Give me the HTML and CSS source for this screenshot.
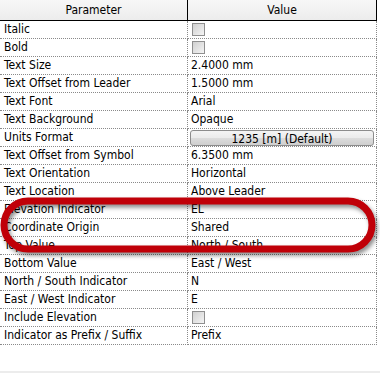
FILE: index.html
```html
<!DOCTYPE html>
<html lang="en">
<head>
    <meta charset="UTF-8">
    <title>Parameters</title>
    <link rel="stylesheet" href="styles.css">
</head>
<body>
    <div class="panel">
        <div class="grid">
            <div class="head">Parameter</div>
            <div class="head last">Value</div>

            <div class="cell">Italic</div>
            <div class="cell val"><span class="check"></span></div>
            <div class="cell">Bold</div>
            <div class="cell val"><span class="check"></span></div>
            <div class="cell">Text Size</div>
            <div class="cell val">2.4000 mm</div>
            <div class="cell">Text Offset from Leader</div>
            <div class="cell val">1.5000 mm</div>
            <div class="cell">Text Font</div>
            <div class="cell val">Arial</div>
            <div class="cell">Text Background</div>
            <div class="cell val">Opaque</div>
            <div class="cell">Units Format</div>
            <div class="cell val"><button class="btn">1235 [m] (Default)</button></div>
            <div class="cell">Text Offset from Symbol</div>
            <div class="cell val">6.3500 mm</div>
            <div class="cell">Text Orientation</div>
            <div class="cell val">Horizontal</div>
            <div class="cell">Text Location</div>
            <div class="cell val">Above Leader</div>
            <div class="cell">Elevation Indicator</div>
            <div class="cell val">EL</div>
            <div class="cell">Coordinate Origin</div>
            <div class="cell val">Shared</div>
            <div class="cell">Top Value</div>
            <div class="cell val">North / South</div>
            <div class="cell">Bottom Value</div>
            <div class="cell val">East / West</div>
            <div class="cell">North / South Indicator</div>
            <div class="cell val">N</div>
            <div class="cell">East / West Indicator</div>
            <div class="cell val">E</div>
            <div class="cell">Include Elevation</div>
            <div class="cell val"><span class="check"></span></div>
            <div class="cell">Indicator as Prefix / Suffix</div>
            <div class="cell val">Prefix</div>
        </div>

        <!-- red marker round two rows -->
        <svg class="marker" width="380" height="64" viewBox="0 0 380 64">
            <rect x="4" y="4" width="368" height="48" rx="24" ry="24" fill="none" stroke="#c00008" stroke-width="7"/>
        </svg>
    </div>
    <div class="bottom"></div>
</body>
</html>
```

FILE: styles.css
```css
body {
    margin: 0;
    padding: 0;
    background: #fff;
    font-family: "DejaVu Sans Condensed", "Liberation Sans", sans-serif;
    font-size: 12px;
    color: #000;
}

.panel {
    position: relative;
    height: 371px;
}

.grid {
    display: grid;
    grid-template-columns: 188px 189px;
    width: 377px;
}

.head {
    height: 20px;
    line-height: 20px;
    text-align: center;
    background: linear-gradient(#f7f7f7, #ececec);
    border-bottom: 1px solid #000;
    border-right: 1px solid #000;
}

.cell {
    height: 17px;
    line-height: 17px;
    padding-left: 4px;
    border-bottom: 1px dotted #8a8a8a;
    border-right: 1px dotted #8a8a8a;
    white-space: nowrap;
    overflow: hidden;
}
.cell.val {
    padding-left: 3px;
    display: flex;
    align-items: center;
}

.check {
    display: block;
    width: 11px;
    height: 11px;
    margin-left: 1px;
    border: 1px solid #8f8f8f;
    background: linear-gradient(135deg, #d0d0d0, #f4f4f4);
}

.btn {
    width: 184px;
    height: 16px;
    margin: 0 0 0 -1px;
    padding: 0;
    font: inherit;
    color: #000;
    border: 1px solid #8c8c8c;
    border-radius: 3px;
    background: linear-gradient(#f4f4f4 0%, #ebebeb 50%, #dcdcdc 51%, #cfcfcf 100%);
}

.marker {
    position: absolute;
    left: 0;
    top: 197px;
    filter: drop-shadow(2px 3px 2px rgba(0,0,0,0.45));
}

.bottom {
    height: 2px;
    background: #ececec;
}
```
